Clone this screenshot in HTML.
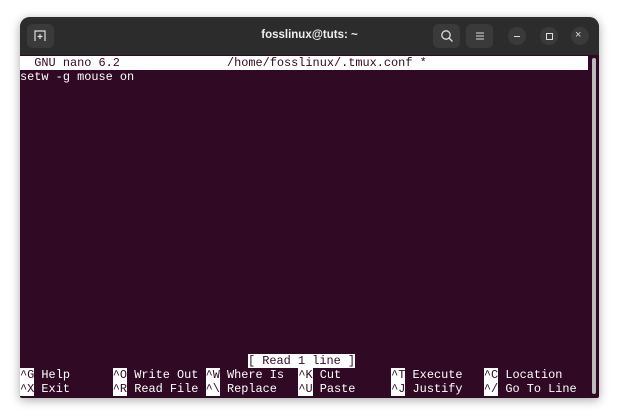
<!DOCTYPE html><html><head><style>
body{margin:0;width:619px;height:420px;background:#fff;position:relative;overflow:hidden;font-family:"Liberation Mono",monospace}
.win{position:absolute;left:20px;top:17px;width:579px;height:381px;background:#300a24;border-radius:10px 10px 2px 2px;overflow:hidden;box-shadow:0 2px 10px rgba(0,0,0,.35)}
.tb{position:absolute;left:0;top:0;width:100%;height:38px;background:#2c2c2c}
.t{position:absolute;font-size:11.9px;line-height:14px;color:#fff;white-space:pre}
.inv{background:#fff;color:#300a24}
.btn{position:absolute;top:7px;width:27px;height:24px;background:#3a3a3a;border-radius:5px}
.c{position:absolute;top:10px;width:18px;height:18px;border-radius:50%;background:#3a3a3a}
</style></head><body>
<div class="win">
<div class="tb">
<div class="btn" style="left:7px"></div>
<svg style="position:absolute;left:14px;top:13px" width="12" height="12"><path d="M1 11V1h10v10" fill="none" stroke="#ddd" stroke-width="1.2"/><path d="M6 4v5M3.5 6.5h5" stroke="#ddd" stroke-width="1.2"/></svg>
<div style="position:absolute;left:0;width:100%;top:12px;text-align:center;color:#eee;font:bold 11.5px 'Liberation Sans',sans-serif">fosslinux@tuts: ~</div>
<div class="btn" style="left:413px"></div>
<svg style="position:absolute;left:420px;top:12px" width="14" height="14"><circle cx="6" cy="6" r="4.2" fill="none" stroke="#ddd" stroke-width="1.3"/><path d="M9 9l3.5 3.5" stroke="#ddd" stroke-width="1.3"/></svg>
<div class="btn" style="left:446px"></div>
<svg style="position:absolute;left:454px;top:13px" width="12" height="12"><path d="M2 3h8M2 6h8M2 9h8" stroke="#ddd" stroke-width="1.1"/></svg>
<div class="c" style="left:488px"></div><div style="position:absolute;left:494px;top:19px;width:6px;height:1.3px;background:#ddd"></div>
<div class="c" style="left:520px"></div><div style="position:absolute;left:526px;top:16px;width:5px;height:5px;border:1.2px solid #ddd"></div>
<div class="c" style="left:551px"></div><div style="position:absolute;left:555px;top:12px;color:#ddd;font:11px 'Liberation Sans',sans-serif">×</div>
</div>
<div class="t inv" style="left:0;top:39px;width:568px;height:14px">  GNU nano 6.2               /home/fosslinux/.tmux.conf *</div>
<div style="position:absolute;left:572px;top:41px;width:4px;height:336px;background:#bbb;border-radius:2px"></div>
<div class="t" style="left:0;top:53px">setw -g mouse on</div>
<div class="t" style="left:228px;top:337px"><span class="inv">[ Read 1 line ]</span></div>
<div class="t" style="left:0;top:351px"><span class="inv">^G</span> Help      <span class="inv">^O</span> Write Out <span class="inv">^W</span> Where Is  <span class="inv">^K</span> Cut       <span class="inv">^T</span> Execute   <span class="inv">^C</span> Location</div>
<div class="t" style="left:0;top:365px"><span class="inv">^X</span> Exit      <span class="inv">^R</span> Read File <span class="inv">^\</span> Replace   <span class="inv">^U</span> Paste     <span class="inv">^J</span> Justify   <span class="inv">^/</span> Go To Line</div>
</div>
</body></html>
